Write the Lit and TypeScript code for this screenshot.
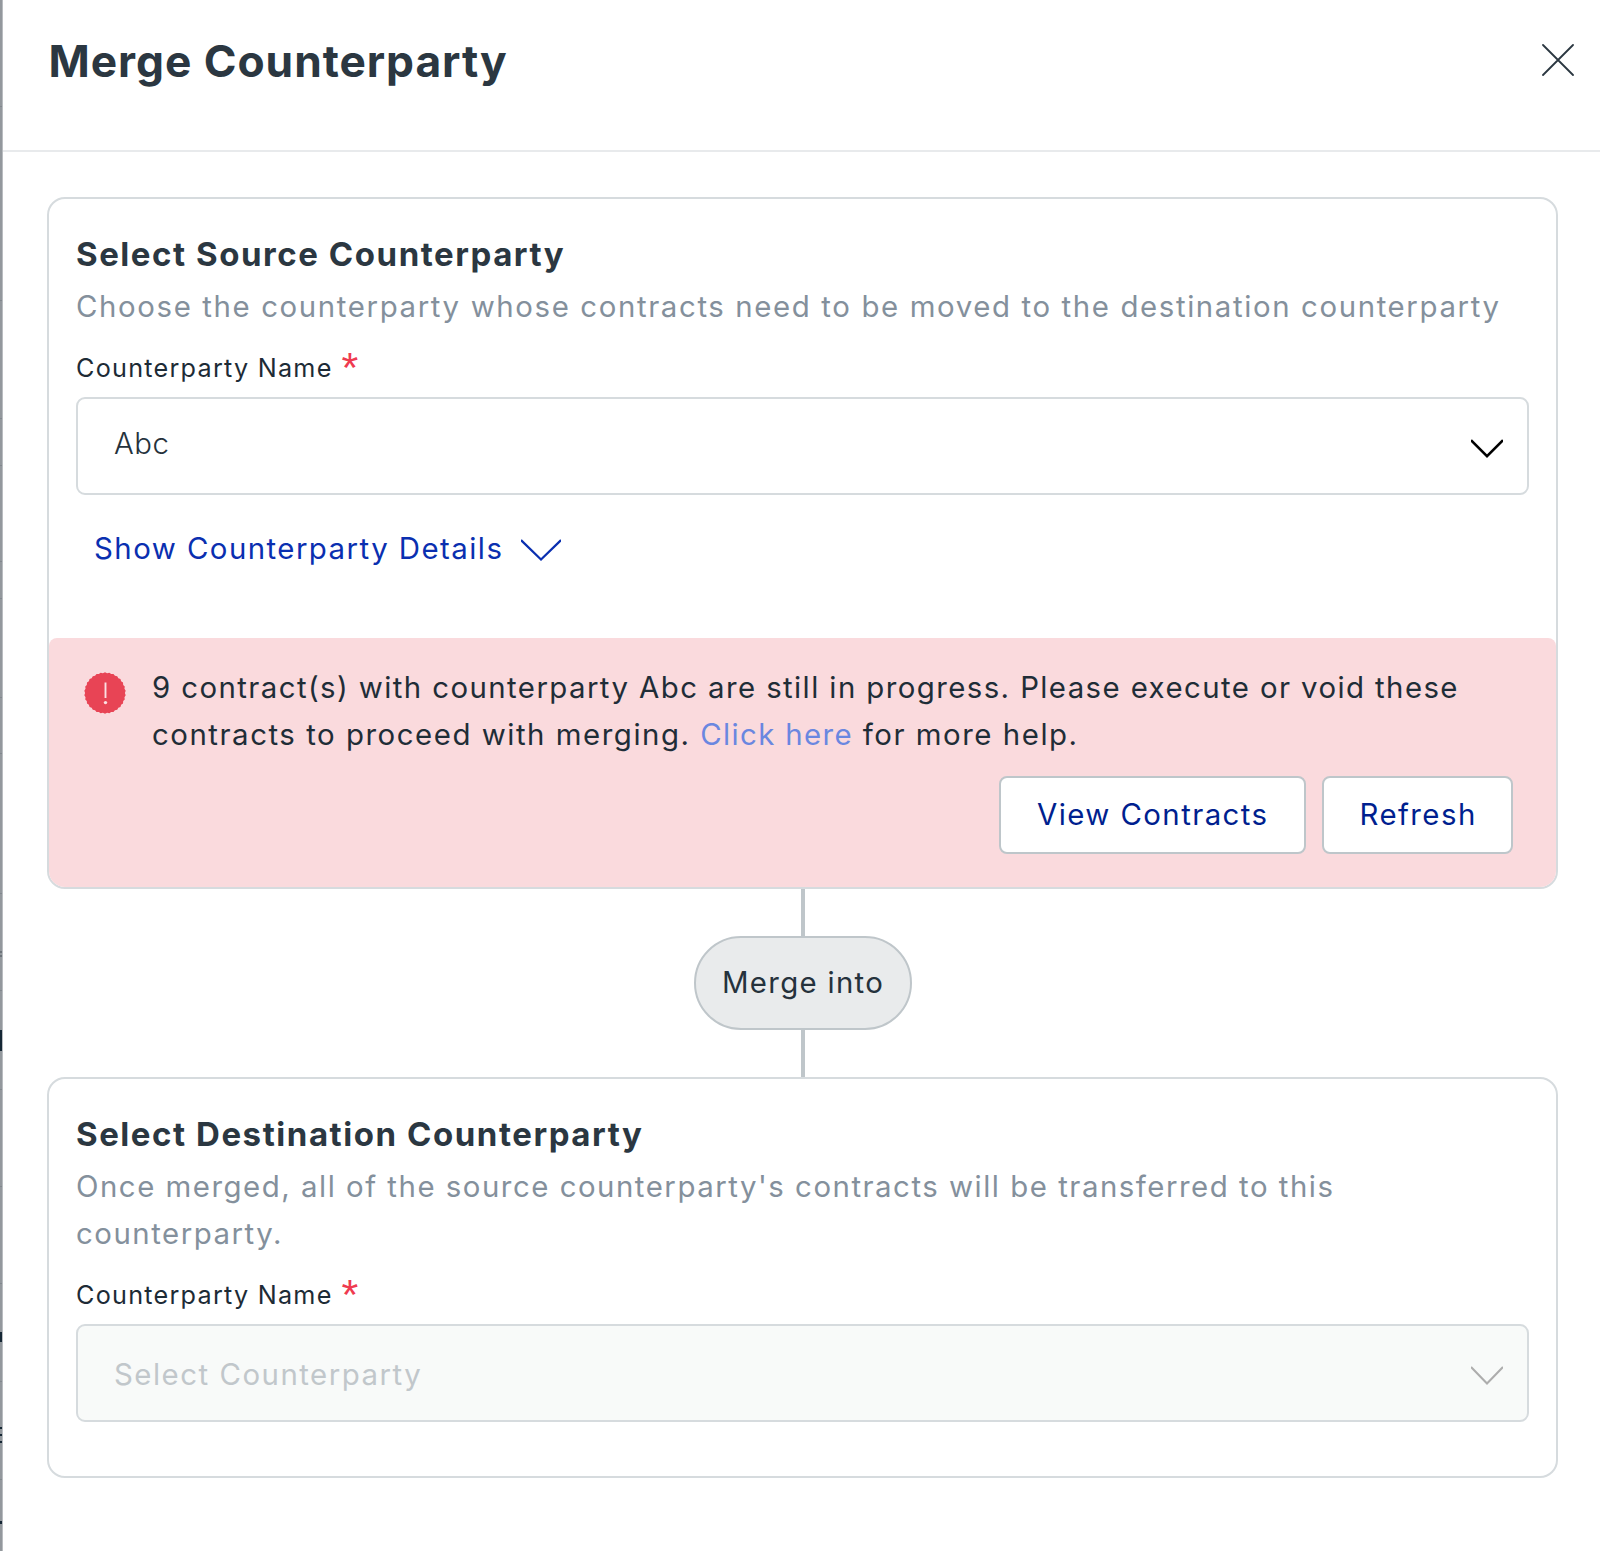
import { LitElement, html, css, svg, nothing } from "lit";
import { customElement, property } from "lit/decorators.js";

/** Down-pointing chevron used by selects and the details toggle. */
const chevron = (w: number, h: number, stroke: number, cls: string) => html`
  <svg class=${cls} width=${w} height=${h} viewBox="0 0 ${w} ${h}" fill="none" stroke="currentColor" stroke-width=${stroke}>
    <path d="M0 ${stroke / 2} L${w / 2} ${h - stroke / 1.4} L${w} ${stroke / 2}" />
  </svg>`;

/** Outline of a finely serrated badge. */
const serrated = (c: number, outer: number, inner: number, teeth: number) =>
  Array.from({ length: teeth * 2 }, (_, i) => {
    const r = i % 2 ? inner : outer;
    const a = (i * Math.PI) / teeth - Math.PI / 2;
    return `${(c + r * Math.cos(a)).toFixed(2)},${(c + r * Math.sin(a)).toFixed(2)}`;
  }).join(" ");

@customElement("select-field")
class SelectField extends LitElement {
  @property() label = "";
  @property() value = "";
  @property({ type: Boolean, reflect: true }) disabled = false;

  static styles = css`
    :host { display: block; }
    .label {
      margin: 0 0 11px;
      font-size: 25.2px;
      line-height: 36px;
      height: 36px;
      letter-spacing: 1.25px;
      color: #1d2b36;
      white-space: nowrap;
    }
    .star {
      font-family: "Liberation Sans", sans-serif;
      font-size: 43px;
      line-height: 0;
      letter-spacing: 0;
      vertical-align: -4.5px;
      margin-left: 9px;
      color: #ef3b50;
    }
    .box {
      box-sizing: border-box;
      height: 98px;
      border: 2px solid #d6dbde;
      border-radius: 9px;
      background: #fff;
      display: flex;
      justify-content: space-between;
      align-items: flex-start;
      padding: 20.5px 24px 0 36px;
    }
    .value {
      font-size: 29.4px;
      line-height: 47px;
      font-weight: 300;
      letter-spacing: 0.55px;
      color: #25323c;
    }
    .arrow { margin-top: 19.5px; color: #000; display: block; }
    :host([disabled]) .box { background: #f8faf9; padding-top: 25px; }
    :host([disabled]) .value { color: #c1c7cb; font-weight: 400; letter-spacing: 1.5px; }
    :host([disabled]) .arrow { margin-top: 15px; color: #adadad; }
  `;

  render() {
    return html`
      <div class="label">${this.label}<span class="star">*</span></div>
      <div class="box">
        <span class="value">${this.value}</span>
        ${chevron(32, 19, this.disabled ? 2.1 : 2.5, "arrow")}
      </div>`;
  }
}

/** Sliver of the dimmed page that stays visible beside the drawer. */
const pageLines = [106, 300, 418, 465, 561, 598, 697, 753, 893, 990, 1089, 1186, 1283, 1381, 1479];
const pageMarks: [number, number, string][] = [
  [951, 2, "#6d747a"],
  [955, 2, "#6d747a"],
  [1030, 21, "#152735"],
  [1332, 10, "#152735"],
  [1427, 2, "#152735"],
  [1434, 2, "#152735"],
  [1441, 2, "#152735"],
  [1521, 3, "#152735"],
];

@customElement("app-root")
class AppRoot extends LitElement {
  static styles = css`
    :host {
      display: flex;
      height: 1551px;
      overflow: hidden;
      background: #fff;
      font-family: Inter, "Liberation Sans", sans-serif;
      color: #25323c;
    }
    .behind { flex: none; width: 3px; height: 1551px; display: block; }
    .drawer { flex: 1; min-width: 0; }
    .header {
      box-sizing: border-box;
      height: 152px;
      border-bottom: 2px solid #e8eaec;
      display: flex;
      justify-content: space-between;
      padding: 33px 26px 0 45.5px;
    }
    h1 {
      margin: 0;
      font-size: 44.3px;
      line-height: 57px;
      font-weight: 700;
      letter-spacing: 0.96px;
      color: #2b3741;
    }
    .close { display: block; margin-top: 11px; }
    .body { padding: 45px 42px 0 44px; }
    .card {
      border: 2px solid #d6dbde;
      border-radius: 18px;
      overflow: hidden;
      box-sizing: border-box;
    }
    .source { height: 692px; }
    .destination { height: 401px; }
    .form { padding: 33px 27px 0; }
    h2 {
      margin: 0 0 6.5px;
      font-size: 33px;
      line-height: 44px;
      font-weight: 700;
      letter-spacing: 1.55px;
      color: #2b3741;
    }
    .hint {
      margin: 0 -20px 20.5px 0;
      font-size: 29.4px;
      line-height: 47px;
      letter-spacing: 1.617px;
      color: #84909c;
    }
    .hint.wrapped { letter-spacing: 1.511px; }
    .toggle {
      display: flex;
      align-items: center;
      gap: 18px;
      margin: 30px 0 66px 18px;
      font-size: 29.4px;
      line-height: 47px;
      letter-spacing: 1.45px;
      color: #0a2fb0;
    }
    .caret { display: block; margin-top: 2px; }
    .alert {
      box-sizing: border-box;
      height: 249px;
      background: #fadadd;
      border-radius: 8px 8px 0 0;
      padding: 26px 43px 0 35px;
    }
    .message { display: flex; gap: 26px; margin-bottom: 18px; }
    .badge { flex: none; display: block; margin-top: 8px; }
    .text { font-size: 29.4px; line-height: 47px; white-space: nowrap; color: #1f2d37; }
    .first { letter-spacing: 1.41px; }
    .second { letter-spacing: 1.53px; }
    .link { color: #6a87e0; letter-spacing: 1.35px; }
    .actions { display: flex; justify-content: flex-end; gap: 16px; }
    .button {
      box-sizing: border-box;
      height: 78px;
      border: 2px solid #bec6ca;
      border-radius: 8px;
      background: #fff;
      padding: 13px 0 0 36px;
      font-size: 29.4px;
      line-height: 47px;
      letter-spacing: 1.42px;
      color: #001f8f;
      white-space: nowrap;
    }
    .view { width: 307px; }
    .refresh { width: 191px; padding-left: 35.5px; letter-spacing: 1.45px; }
    .joint { display: flex; flex-direction: column; align-items: center; }
    .line { width: 4px; height: 47px; background: #bfc6ca; }
    .pill {
      box-sizing: border-box;
      width: 218px;
      height: 94px;
      border: 2px solid #bfc6ca;
      border-radius: 47px;
      background: #e9ebec;
      padding: 20.5px 0 0 26.5px;
      font-size: 29.4px;
      line-height: 47px;
      letter-spacing: 1.3px;
      white-space: nowrap;
    }
  `;

  private card(kind: string, title: string, hint: unknown, field: unknown, extra: unknown = nothing, alert: unknown = nothing) {
    return html`
      <section class="card ${kind}">
        <div class="form">
          <h2>${title}</h2>
          ${hint}${field}${extra}
        </div>
        ${alert}
      </section>`;
  }

  render() {
    return html`
      <svg class="behind" viewBox="0 0 3 1551" shape-rendering="crispEdges">
        <rect width="2" height="1551" fill="#93989d" />
        <rect x="2" width="1" height="1551" fill="#b9bcc0" />
        ${pageLines.map((y) => svg`<rect y=${y} width="2" height="1" fill="#82888e" />`)}
        ${pageMarks.map(([y, h, fill]) => svg`<rect y=${y} width="2" height=${h} fill=${fill} />`)}
      </svg>
      <main class="drawer">
        <header class="header">
          <h1>Merge Counterparty</h1>
          <svg class="close" width="32" height="32" viewBox="0 0 32 32" fill="none" stroke="#2b3741" stroke-width="1.8" stroke-linecap="round">
            <path d="M1 1 L31 31 M31 1 L1 31" />
          </svg>
        </header>
        <div class="body">
          ${this.card(
            "source",
            "Select Source Counterparty",
            html`<div class="hint">Choose the counterparty whose contracts need to be moved to the destination counterparty</div>`,
            html`<select-field label="Counterparty Name" value="Abc"></select-field>`,
            html`<div class="toggle"><span>Show Counterparty Details</span>${chevron(40, 22, 2.2, "caret")}</div>`,
            html`
              <div class="alert">
                <div class="message">
                  <svg class="badge" width="42" height="42" viewBox="0 0 42 42">
                    <polygon points=${serrated(21, 20.8, 19.9, 30)} fill="#e84455" />
                    <path d="M21.5 10.5 V26" stroke="#fbdfe2" stroke-width="1.9" />
                    <circle cx="21.5" cy="30.6" r="1.7" fill="#fbdfe2" />
                  </svg>
                  <div class="text">
                    <div class="first">9 contract(s) with counterparty Abc are still in progress. Please execute or void these</div>
                    <div class="second">contracts to proceed with merging. <span class="link">Click here</span> for more help.</div>
                  </div>
                </div>
                <div class="actions">
                  <div class="button view">View Contracts</div>
                  <div class="button refresh">Refresh</div>
                </div>
              </div>`
          )}
          <div class="joint">
            <div class="line"></div>
            <div class="pill">Merge into</div>
            <div class="line"></div>
          </div>
          ${this.card(
            "destination",
            "Select Destination Counterparty",
            html`<div class="hint wrapped">Once merged, all of the source counterparty's contracts will be transferred to this<br />counterparty.</div>`,
            html`<select-field label="Counterparty Name" value="Select Counterparty" disabled></select-field>`
          )}
        </div>
      </main>`;
  }
}
